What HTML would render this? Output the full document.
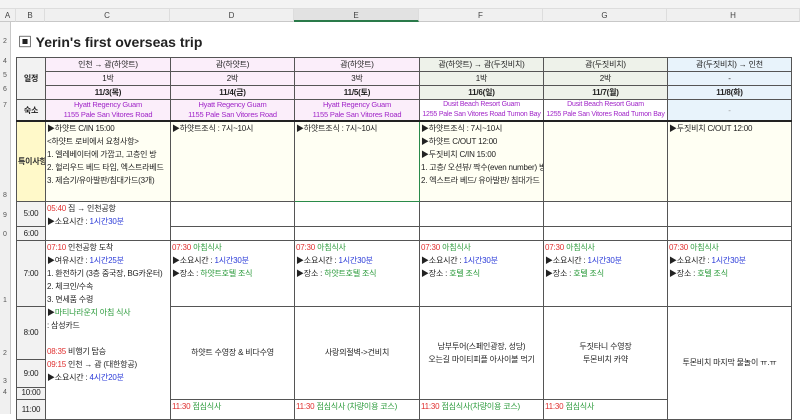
<!DOCTYPE html>
<html><head><meta charset="utf-8"><style>
body{margin:0;width:800px;height:414px;overflow:hidden;background:#fff;font-family:"Liberation Sans","Noto Sans CJK KR",sans-serif;position:relative}
.top{position:absolute;left:0;top:0;width:800px;height:8px;background:#f3f3f3;border-bottom:1px solid #ddd}
.colh{position:absolute;top:9px;height:13px;background:#f0f0f0;border-bottom:1px solid #c8c8c8;font-size:8px;color:#444;text-align:center;line-height:13px;border-right:1px solid #ddd;box-sizing:border-box}
.rowh{position:absolute;left:0;width:10px;background:#f0f0f0;border-right:1px solid #c8c8c8;top:22px;height:392px}
.rn{position:absolute;left:0;width:10px;font-size:7px;color:#555;text-align:center}
.title{position:absolute;left:18px;top:32px;font-size:14px;font-weight:bold;color:#222}
table{position:absolute;left:16px;top:57px;width:775px;border-collapse:collapse;table-layout:fixed;font-size:8px;color:#222}
td{border:1px solid #555;padding:0 1px;overflow:hidden;white-space:nowrap;vertical-align:top;line-height:13px;letter-spacing:-0.2px}
.c{text-align:center;vertical-align:middle}
.b{font-weight:bold}
.pk{background:#fbeefa}.gr{background:#eef2ea}.bl{background:#e8f3fb}
.gy{background:#f2f2f2}.ye{background:#fff9c9}.cr{background:#fffff3}
.h{color:#a024c8;line-height:10px;font-size:7.5px}
.r{color:#e03030}.g{color:#2a9a3a}.u{color:#2a3ad8}
.tb{border-bottom:2px solid #222}
</style></head><body>
<div class="top"></div>
<div class="colh" style="left:0;width:16px">A</div>
<div class="colh" style="left:16px;width:29px">B</div>
<div class="colh" style="left:45px;width:125px">C</div>
<div class="colh" style="left:170px;width:124px">D</div>
<div class="colh" style="left:294px;width:125px;background:#e2e2e2;border-bottom:2px solid #2a7a4a">E</div>
<div class="colh" style="left:419px;width:124px">F</div>
<div class="colh" style="left:543px;width:124px">G</div>
<div class="colh" style="left:667px;width:133px">H</div>
<div class="rowh"></div>
<div class="rn" style="top:38px">2</div><div class="rn" style="top:58px">4</div><div class="rn" style="top:72px">5</div><div class="rn" style="top:86px">6</div><div class="rn" style="top:102px">7</div><div class="rn" style="top:192px">8</div><div class="rn" style="top:212px">9</div><div class="rn" style="top:231px">0</div><div class="rn" style="top:297px">1</div><div class="rn" style="top:350px">2</div><div class="rn" style="top:378px">3</div><div class="rn" style="top:389px">4</div>
<div class="title">▣ Yerin's first overseas trip</div>
<table>
<colgroup><col style="width:29px"><col style="width:125px"><col style="width:124px"><col style="width:125px"><col style="width:124px"><col style="width:124px"><col style="width:124px"></colgroup>
<tr style="height:13px"><td class="c gy b" rowspan="3">일정</td><td class="c pk">인천 → 괌(하얏트)</td><td class="c pk">괌(하얏트)</td><td class="c pk">괌(하얏트)</td><td class="c gr">괌(하얏트) → 괌(두짓비치)</td><td class="c gr">괌(두짓비치)</td><td class="c bl">괌(두짓비치) → 인천</td></tr>
<tr style="height:14px"><td class="c pk">1박</td><td class="c pk">2박</td><td class="c pk">3박</td><td class="c gr">1박</td><td class="c gr">2박</td><td class="c bl">-</td></tr>
<tr style="height:13px"><td class="c pk b">11/3(목)</td><td class="c pk b">11/4(금)</td><td class="c pk b">11/5(토)</td><td class="c gr b">11/6(일)</td><td class="c gr b">11/7(월)</td><td class="c bl b">11/8(화)</td></tr>
<tr style="height:20px"><td class="c gy b tb">숙소</td><td class="c pk h tb">Hyatt Regency Guam<br>1155 Pale San Vitores Road</td><td class="c pk h tb">Hyatt Regency Guam<br>1155 Pale San Vitores Road</td><td class="c pk h tb">Hyatt Regency Guam<br>1155 Pale San Vitores Road</td><td class="c h tb" style="font-size:7px">Dusit Beach Resort Guam<br>1255 Pale San Vitores Road Tumon Bay</td><td class="c h tb" style="font-size:7px">Dusit Beach Resort Guam<br>1255 Pale San Vitores Road Tumon Bay</td><td class="c bl tb" style="color:#999">-</td></tr>
<tr style="height:80px"><td class="c ye b" style="color:#333">특이사항</td><td class="cr">▶하얏트 C/IN 15:00<br>&lt;하얏트 로비에서 요청사항&gt;<br>1. 엘레베이터에 가깝고, 고층인 방<br>2. 헐리우드 베드 타입, 엑스트라베드<br>3. 제습기/유아발판/침대가드(3개)</td><td class="cr">▶하얏트조식 : 7시~10시</td><td class="cr" style="border:1.5px solid #2a8a4a">▶하얏트조식 : 7시~10시</td><td class="cr">▶하얏트조식 : 7시~10시<br>▶하얏트 C/OUT 12:00<br>▶두짓비치 C/IN 15:00<br>1. 고층/ 오션뷰/ 짝수(even number) 방<br>2. 엑스트라 베드/ 유아발판/ 침대가드</td><td class="cr"></td><td class="cr">▶두짓비치 C/OUT 12:00</td></tr>
<tr style="height:25px"><td class="c gy">5:00</td><td rowspan="2"><span class="r">05:40</span> 집 → 인천공항<br>▶소요시간 : <span class="u">1시간30분</span></td><td></td><td></td><td></td><td></td><td></td></tr>
<tr style="height:13px"><td class="c gy">6:00</td><td></td><td></td><td></td><td></td><td></td></tr>
<tr style="height:66px"><td class="c gy">7:00</td><td rowspan="5"><span class="r">07:10</span> 인천공항 도착<br>▶여유시간 : <span class="u">1시간25분</span><br>1. 환전하기 (3층 중국장, BG카운터)<br>2. 체크인/수속<br>3. 면세품 수령<br>▶<span class="g">마티나라운지 아침 식사</span><br>: 삼성카드<br><br><span class="r">08:35</span> 비행기 탑승<br><span class="r">09:15</span> 인천 → 괌 (대한항공)<br>▶소요시간 : <span class="u">4시간20분</span></td><td><span class="r">07:30</span> <span class="g">아침식사</span><br>▶소요시간 : <span class="u">1시간30분</span><br>▶장소 : <span class="g">하얏트호텔 조식</span></td><td><span class="r">07:30</span> <span class="g">아침식사</span><br>▶소요시간 : <span class="u">1시간30분</span><br>▶장소 : <span class="g">하얏트호텔 조식</span></td><td><span class="r">07:30</span> <span class="g">아침식사</span><br>▶소요시간 : <span class="u">1시간30분</span><br>▶장소 : <span class="g">호텔 조식</span></td><td><span class="r">07:30</span> <span class="g">아침식사</span><br>▶소요시간 : <span class="u">1시간30분</span><br>▶장소 : <span class="g">호텔 조식</span></td><td><span class="r">07:30</span> <span class="g">아침식사</span><br>▶소요시간 : <span class="u">1시간30분</span><br>▶장소 : <span class="g">호텔 조식</span></td></tr>
<tr style="height:53px"><td class="c gy">8:00</td><td class="c" rowspan="3">하얏트 수영장 &amp; 비다수영</td><td class="c" rowspan="3">사랑의절벽-&gt;건비치</td><td class="c" rowspan="3">남부투어(스페인광장, 성당)<br>오는길 마이티피플 아사이볼 먹기</td><td class="c" rowspan="3">두짓타니 수영장<br>투몬비치 카약</td><td class="c" rowspan="4">투몬비치 마지막 물놀이 ㅠ.ㅠ</td></tr>
<tr style="height:28px"><td class="c gy">9:00</td></tr>
<tr style="height:12px"><td class="c gy" style="line-height:10px">10:00</td></tr>
<tr style="height:20px"><td class="c gy">11:00</td><td><span class="r">11:30</span> <span class="g">점심식사</span></td><td><span class="r">11:30</span> <span class="g">점심식사 (차량이용 코스)</span></td><td><span class="r">11:30</span> <span class="g">점심식사(차량이용 코스)</span></td><td><span class="r">11:30</span> <span class="g">점심식사</span></td></tr>
</table>
</body></html>
